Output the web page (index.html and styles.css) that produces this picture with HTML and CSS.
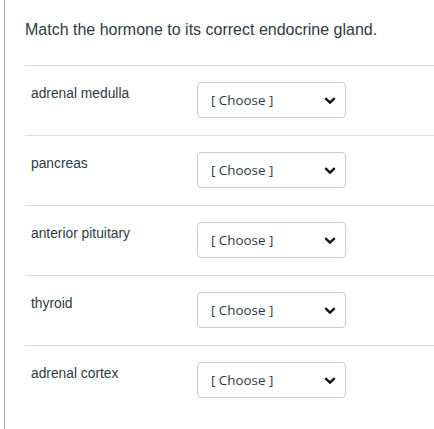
FILE: index.html
```html
<!DOCTYPE html>
<html>
<head>
<meta charset="utf-8">
<link rel="stylesheet" href="styles.css">
</head>
<body>
<div class="frame">
  <div class="question">
    <p class="title">Match the hormone to its correct endocrine gland.</p>
    <div class="rows">
      <div class="row">
        <div class="label">adrenal medulla</div>
        <div class="select"><span>[ Choose ]</span><svg class="chev" width="12" height="7" viewBox="0 0 12 7"><path d="M1.3 1.2 L6 5.6 L10.7 1.2" fill="none" stroke="#111" stroke-width="2.4"/></svg></div>
      </div>
      <div class="row">
        <div class="label">pancreas</div>
        <div class="select"><span>[ Choose ]</span><svg class="chev" width="12" height="7" viewBox="0 0 12 7"><path d="M1.3 1.2 L6 5.6 L10.7 1.2" fill="none" stroke="#111" stroke-width="2.4"/></svg></div>
      </div>
      <div class="row">
        <div class="label">anterior pituitary</div>
        <div class="select"><span>[ Choose ]</span><svg class="chev" width="12" height="7" viewBox="0 0 12 7"><path d="M1.3 1.2 L6 5.6 L10.7 1.2" fill="none" stroke="#111" stroke-width="2.4"/></svg></div>
      </div>
      <div class="row">
        <div class="label">thyroid</div>
        <div class="select"><span>[ Choose ]</span><svg class="chev" width="12" height="7" viewBox="0 0 12 7"><path d="M1.3 1.2 L6 5.6 L10.7 1.2" fill="none" stroke="#111" stroke-width="2.4"/></svg></div>
      </div>
      <div class="row">
        <div class="label">adrenal cortex</div>
        <div class="select"><span>[ Choose ]</span><svg class="chev" width="12" height="7" viewBox="0 0 12 7"><path d="M1.3 1.2 L6 5.6 L10.7 1.2" fill="none" stroke="#111" stroke-width="2.4"/></svg></div>
      </div>
    </div>
  </div>
</div>
</body>
</html>
```
FILE: styles.css
```css
html, body {
  margin: 0;
  padding: 0;
  background: #fff;
}
body {
  font-family: "Liberation Sans", Arial, sans-serif;
  color: #2d3b45;
}
.frame {
  margin-left: 4px;
  border-left: 1px solid #b0b0b0;
  min-height: 429px;
  box-sizing: border-box;
}
.question {
  padding-left: 20px;
  padding-top: 21px;
}
.title {
  margin: 0;
  font-size: 16px;
  line-height: 18px;
  color: #2d3b45;
  padding-bottom: 26px;
}
.row {
  display: flex;
  align-items: flex-start;
  border-top: 1px solid #dcdcdc;
  padding: 16px 0 17px 6px;
}
.label {
  width: 166px;
  font-size: 13.8px;
  line-height: 16px;
  padding-top: 4px;
  color: #2d3b45;
}
.select {
  width: 149px;
  height: 36px;
  box-sizing: border-box;
  border: 1px solid #c7cdd1;
  border-radius: 4px;
  display: flex;
  align-items: center;
  justify-content: space-between;
  padding: 0 9px 0 13px;
  font-family: "Open Sans", sans-serif;
  font-size: 13.4px;
  color: #2d3b45;
}
.select span {
  padding-top: 0;
}
.chev {
  display: block;
  margin-top: 1px;
}
```
